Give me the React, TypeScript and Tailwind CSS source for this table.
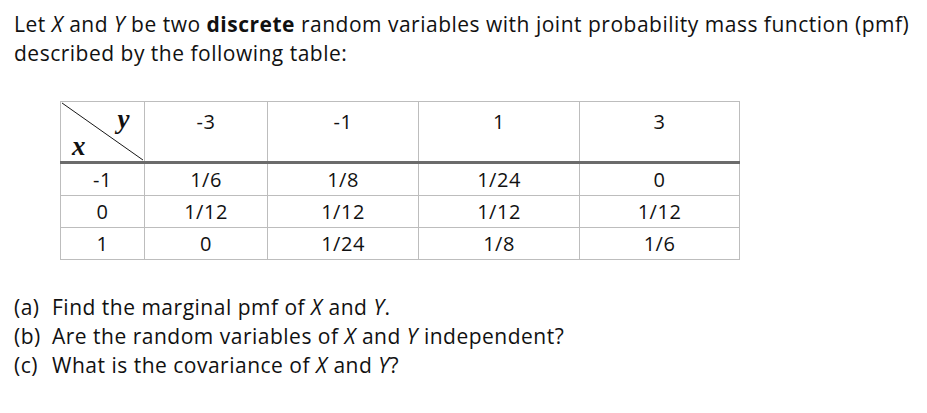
const header = ["-3", "-1", "1", "3"];

const rows = [
  { x: "-1", p: ["1/6", "1/8", "1/24", "0"] },
  { x: "0", p: ["1/12", "1/12", "1/12", "1/12"] },
  { x: "1", p: ["0", "1/24", "1/8", "1/6"] },
];

const colWidths = ["w-[123px]", "w-[151px]", "w-[161px]", "w-[160px]"];

function Var({ children }: { children: string }) {
  return <span className="italic">{children}</span>;
}

export default function App() {
  return (
    <div className="min-h-screen bg-white text-[#111] font-['Open_Sans',sans-serif] text-[21px] leading-[29px] tracking-[0.5px] pl-[14px] pt-[10px]">
      <p>
        Let <Var>X</Var> and <Var>Y</Var> be two <b>discrete</b> random variables with joint
        probability mass function (pmf)
        <br />
        described by the following table:
      </p>

      {/* Joint pmf table */}
      <table className="mt-[33px] ml-[46px] table-fixed border-collapse text-[20px] leading-[31px]">
        <thead>
          <tr className="h-[61px] border-b-[3px] border-b-[#6b6b6b]">
            <th className="relative w-[84px] border border-[#bdbdbd] p-0 font-normal">
              <svg className="absolute inset-0 h-full w-full" viewBox="0 0 84 61" preserveAspectRatio="none">
                <line x1="1" y1="1" x2="83" y2="60" stroke="#111" strokeWidth="1" />
              </svg>
              <span className="absolute right-[14px] top-[2px] font-['Liberation_Serif',serif] text-[27px] leading-[30px] font-bold italic">
                y
              </span>
              <span className="absolute bottom-[0px] left-[11px] font-['Liberation_Serif',serif] text-[27px] leading-[30px] font-bold italic">
                x
              </span>
            </th>
            {header.map((h, i) => (
              <th
                key={h}
                className={`${colWidths[i]} border border-[#bdbdbd] p-0 pt-[4px] align-top font-normal`}
              >
                {h}
              </th>
            ))}
          </tr>
        </thead>
        <tbody>
          {rows.map((r) => (
            <tr key={r.x}>
              <td className="border border-[#bdbdbd] p-0 text-center">{r.x}</td>
              {r.p.map((v, i) => (
                <td key={i} className="border border-[#bdbdbd] p-0 text-center">
                  {v}
                </td>
              ))}
            </tr>
          ))}
        </tbody>
      </table>

      {/* Questions */}
      <ol className="mt-[33px]">
        <li className="flex">
          <span className="w-[38px] shrink-0">(a)</span>
          <span>
            Find the marginal pmf of <Var>X</Var> and <Var>Y</Var>.
          </span>
        </li>
        <li className="flex">
          <span className="w-[38px] shrink-0">(b)</span>
          <span>
            Are the random variables of <Var>X</Var> and <Var>Y</Var> independent?
          </span>
        </li>
        <li className="flex">
          <span className="w-[38px] shrink-0">(c)</span>
          <span>
            What is the covariance of <Var>X</Var> and <Var>Y</Var>?
          </span>
        </li>
      </ol>
    </div>
  );
}
